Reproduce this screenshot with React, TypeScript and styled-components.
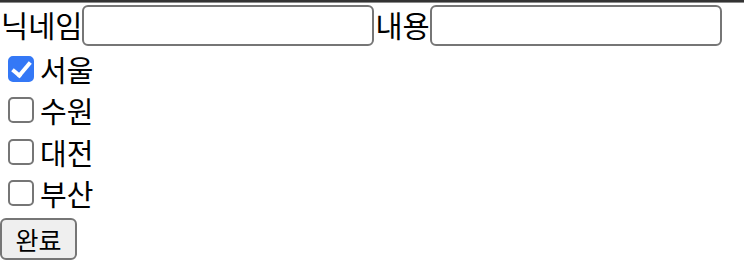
import React, {useState} from 'react';
import styled, {createGlobalStyle} from 'styled-components';

const GlobalStyle = createGlobalStyle`
  body {
    margin: 0;
    background: #ffffff;
    font-family: "Noto Sans CJK KR", "Noto Sans", sans-serif;
    color: #000000;
  }
`

// 화면 위쪽 어두운 줄
const TopBar = styled.div`
  height: 2px;
  background: #333333;
  border-bottom: 1px solid #8a8a8a;
`

const Form = styled.form`
  display: flex;
  flex-direction: column;
  align-items: flex-start;
`

const InputRow = styled.div`
  display: flex;
  align-items: center;
  height: 45px;
  padding-left: 1px;
`

const Label = styled.label`
  font-size: 29.5px;
  line-height: 1;
  margin-top: -2px;
`

const TextInput = styled.input`
  box-sizing: border-box;
  width: 292px;
  height: 41px;
  margin: 0 1px 0 0;
  border: 2px solid #767676;
  border-radius: 6px;
  background: #ffffff;
  font-size: 24px;
  padding: 0 6px;
  outline: none;
`

const CheckRow = styled.label`
  display: flex;
  align-items: center;
  height: 41.5px;
  font-size: 29px;
`

const CheckBox = styled.input`
  appearance: none;
  position: relative;
  box-sizing: border-box;
  width: 26px;
  height: 26px;
  margin: 0 6px 0 8px;
  border: 2px solid #767676;
  border-radius: 5px;
  background: #ffffff;

  &:checked {
    background: #3478f6;
    border-color: #3478f6;
  }

  &:checked::after {
    content: "";
    position: absolute;
    left: 6px;
    top: 0px;
    width: 7px;
    height: 15px;
    border-right: 4px solid #ffffff;
    border-bottom: 4px solid #ffffff;
    transform: rotate(40deg);
  }
`

const Button = styled.button`
  box-sizing: border-box;
  width: 77px;
  height: 42px;
  margin-top: 4px;
  padding: 0;
  border: 2px solid #767676;
  border-radius: 6px;
  background: #efefef;
  font-family: "Noto Sans CJK KR", "Noto Sans", sans-serif;
  font-size: 25px;
  line-height: 1;
  color: #000000;
`

const cities = ['서울', '수원', '대전', '부산'];

function App() {
    const [checked, setChecked] = useState<string[]>(['서울']);

    const toggle = (city: string) => {
        setChecked(prev => prev.includes(city) ? prev.filter(c => c !== city) : [...prev, city]);
    };

    return (
        <>
            <GlobalStyle/>
            <TopBar/>
            <Form onSubmit={e => e.preventDefault()}>
                <InputRow>
                    <Label>닉네임</Label>
                    <TextInput type="text"/>
                    <Label>내용</Label>
                    <TextInput type="text"/>
                </InputRow>
                {cities.map(city => (
                    <CheckRow key={city}>
                        <CheckBox
                            type="checkbox"
                            checked={checked.includes(city)}
                            onChange={() => toggle(city)}
                        />
                        {city}
                    </CheckRow>
                ))}
                <Button type="submit">완료</Button>
            </Form>
        </>
    );
}

export default App;
